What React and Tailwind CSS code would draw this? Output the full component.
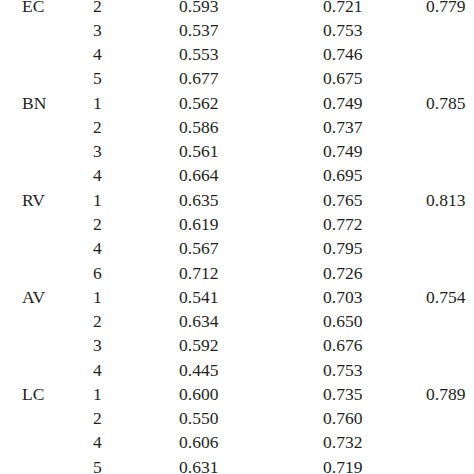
import React from "react";

const rows = [
    ["EC", "2", "0.593", "0.721", "0.779"],
    ["", "3", "0.537", "0.753", ""],
    ["", "4", "0.553", "0.746", ""],
    ["", "5", "0.677", "0.675", ""],
    ["BN", "1", "0.562", "0.749", "0.785"],
    ["", "2", "0.586", "0.737", ""],
    ["", "3", "0.561", "0.749", ""],
    ["", "4", "0.664", "0.695", ""],
    ["RV", "1", "0.635", "0.765", "0.813"],
    ["", "2", "0.619", "0.772", ""],
    ["", "4", "0.567", "0.795", ""],
    ["", "6", "0.712", "0.726", ""],
    ["AV", "1", "0.541", "0.703", "0.754"],
    ["", "2", "0.634", "0.650", ""],
    ["", "3", "0.592", "0.676", ""],
    ["", "4", "0.445", "0.753", ""],
    ["LC", "1", "0.600", "0.735", "0.789"],
    ["", "2", "0.550", "0.760", ""],
    ["", "4", "0.606", "0.732", ""],
    ["", "5", "0.631", "0.719", ""],
]

export default function App() {
    return (
        <div className="w-[474px] h-[474px] overflow-hidden bg-white text-[#231f20] font-['Liberation_Serif',serif] text-[17.5px]">
            <div className="flex flex-col -mt-[6.4px]">
                {rows.map((r, i) => (
                    <div key={i} className="flex h-[24.28px] leading-[24.28px]">
                        <div className="w-[93px] pl-[22px]">{r[0]}</div>
                        <div className="w-[86px]">{r[1]}</div>
                        <div className="w-[144px]">{r[2]}</div>
                        <div className="w-[103px]">{r[3]}</div>
                        <div className="flex-1">{r[4]}</div>
                    </div>
                ))}
            </div>
        </div>
    )
}
